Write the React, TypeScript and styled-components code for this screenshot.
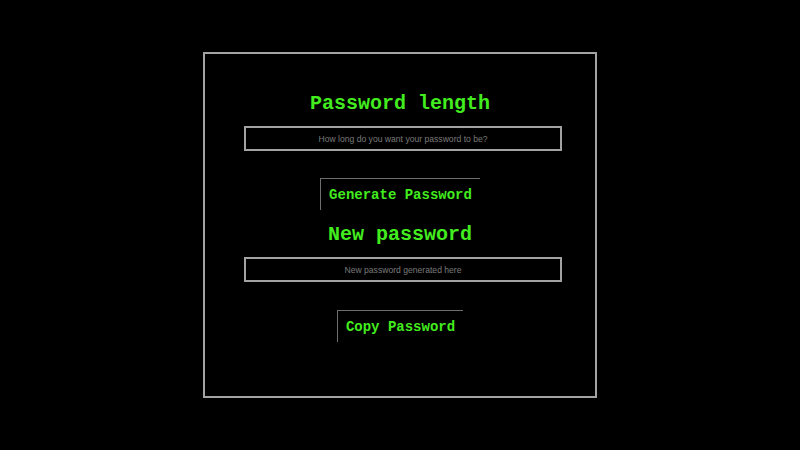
import styled, { createGlobalStyle } from 'styled-components';

const GREEN = '#42ec1e';

const GlobalStyle = createGlobalStyle`
  html, body {
    margin: 0;
    padding: 0;
    background: #000;
    height: 100%;
  }
  #root {
    height: 100%;
  }
`;

const Page = styled.main`
  height: 450px;
  box-sizing: border-box;
  padding-top: 52px;
  display: flex;
  justify-content: center;
  align-items: flex-start;
`;

const Card = styled.section`
  box-sizing: border-box;
  width: 394px;
  height: 346px;
  border: 2px solid #a3a3a3;
  display: flex;
  flex-direction: column;
  align-items: center;
  padding-top: 38px;
`;

const Heading = styled.h2<{ $gap?: number }>`
  margin: ${(props) => props.$gap || 0}px 0 0;
  font-family: 'Liberation Mono', 'Courier New', monospace;
  font-weight: bold;
  font-size: 20px;
  line-height: 24px;
  color: ${GREEN};
`;

const Field = styled.input`
  box-sizing: border-box;
  width: 318px;
  height: 25px;
  margin: 10px 0 0 6px;
  padding: 0;
  border: 2px solid #a3a3a3;
  background: #000;
  color: #ccc;
  text-align: center;
  font-family: 'Liberation Sans', Arial, sans-serif;
  font-size: 8.6px;
  outline: none;

  &::placeholder {
    color: #7a7a7a;
  }
`;

const Button = styled.button<{ $gap: number }>`
  box-sizing: border-box;
  height: 32px;
  margin-top: ${(props) => props.$gap}px;
  padding: 0 8px;
  background: transparent;
  border: none;
  border-top: 1px solid #6e6e6e;
  border-left: 1px solid #6e6e6e;
  color: ${GREEN};
  font-family: 'Liberation Mono', 'Courier New', monospace;
  font-weight: bold;
  font-size: 14px;
  cursor: pointer;
`;

const App = () => {
  return (
    <>
      <GlobalStyle />
      <Page>
        <Card>
          <Heading>Password length</Heading>
          <Field type="text" inputMode="numeric" placeholder="How long do you want your password to be?" />
          <Button $gap={27}>Generate Password</Button>

          <Heading $gap={13}>New password</Heading>
          <Field type="text" readOnly placeholder="New password generated here" />
          <Button $gap={28}>Copy Password</Button>
        </Card>
      </Page>
    </>
  );
};

export default App;
